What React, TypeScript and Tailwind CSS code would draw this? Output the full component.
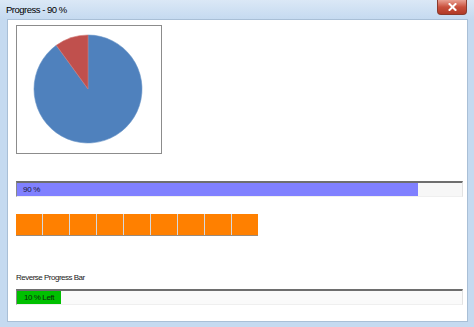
export default function App() {
  const blocks = Array.from({ length: 9 });

  return (
    <div className="w-[474px] h-[327px] flex flex-col bg-[#c5daf0] font-['Liberation_Sans',sans-serif] overflow-hidden">
      {/* Title bar */}
      <div className="h-[19px] flex items-start justify-between bg-gradient-to-b from-[#dbe8f6] to-[#c5daf0]">
        <span className="pl-[6px] pt-[4px] text-[9.5px] leading-[12px] tracking-[-0.5px] text-black">
          Progress - 90 %
        </span>
        <div className="mr-[7px] w-[30px] h-[15px] rounded-b-[4px] bg-gradient-to-b from-[#e8a093] via-[#c9503d] to-[#b13a26] border border-[#8a3a2c] border-t-0 flex items-center justify-center">
          <svg width="9" height="8" viewBox="0 0 9 8">
            <path d="M1.5 1 L7.5 7 M7.5 1 L1.5 7" stroke="#ffffff" strokeWidth="2" strokeLinecap="square" />
          </svg>
        </div>
      </div>

      {/* Client area */}
      <div className="ml-[7px] mr-[6px] mb-[5px] flex-1 bg-white border border-[#a9bfd6] pl-[8px] pr-[4px] pt-[5px] flex flex-col">
        {/* Pie chart */}
        <div className="w-[146px] h-[129px] border border-[#8c8c8c] bg-white">
          <svg width="144" height="127" viewBox="0 0 144 127">
            <path d="M71 63 L71 9 A54 54 0 1 1 39.26 19.31 Z" fill="#4f81bd" stroke="#6a95c8" strokeWidth="0.6" />
            <path d="M71 63 L39.26 19.31 A54 54 0 0 1 71 9 Z" fill="#c0504d" stroke="#d07a77" strokeWidth="0.6" />
          </svg>
        </div>

        {/* Progress bar */}
        <div className="mt-[27px] w-[447px] h-[16px] bg-[#f7f7f7] border-t-2 border-t-[#6e6e6e] border-l border-l-[#8a8a8a] border-r border-r-[#e2e2e2] border-b border-b-[#efefef] flex">
          <div className="w-[401px] h-full bg-[#8080ff] flex items-center pl-[6px]">
            <span className="text-[8px] leading-none tracking-[-0.3px] text-[#1a1a3a]">90 %</span>
          </div>
        </div>

        {/* Block bar */}
        <div className="mt-[17px] flex gap-px w-[242px] h-[22px] bg-[#d4d9df] border-b border-b-[#9a8a7a]">
          {blocks.map((_, i) => (
            <div key={i} className="w-[26px] h-full bg-[#ff8000]" />
          ))}
        </div>

        {/* Reverse label */}
        <span className="mt-[37px] text-[8px] leading-[10px] tracking-[-0.5px] text-[#1a1a1a]">Reverse Progress Bar</span>

        {/* Reverse progress bar */}
        <div className="mt-[6px] w-[447px] h-[16px] bg-[#fafafa] border-t-2 border-t-[#6e6e6e] border-l border-l-[#8a8a8a] border-r border-r-[#e2e2e2] border-b border-b-[#efefef] flex">
          <div className="w-[44px] h-full bg-[#00c000] flex items-center justify-center">
            <span className="text-[8px] leading-none tracking-[-0.4px] text-[#0a2a0a]">10 % Left</span>
          </div>
        </div>
      </div>
    </div>
  );
}
